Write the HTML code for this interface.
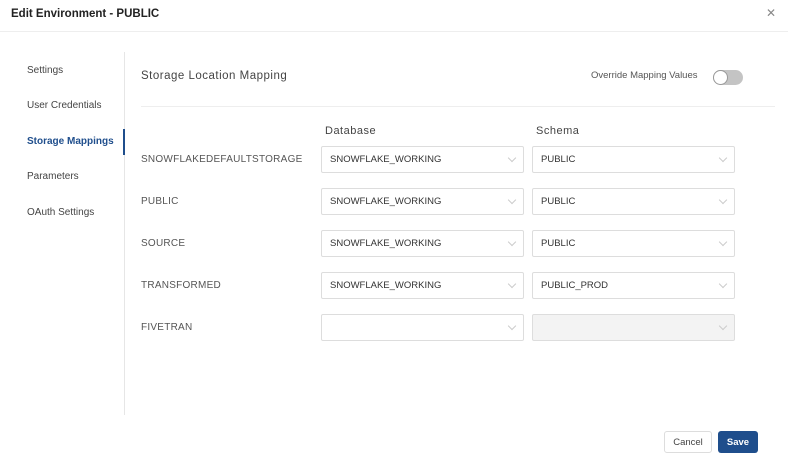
<!DOCTYPE html>
<html><head><style>
*{box-sizing:border-box;margin:0;padding:0}
body{width:788px;height:465px;background:#fff;font-family:"Liberation Sans",sans-serif;position:relative;overflow:hidden;color:#333}
.a{position:absolute}
.hdr{left:11px;top:8px;font-size:11.5px;font-weight:bold;color:#222}
.x{left:766px;top:6px;font-size:12px;color:#888;font-weight:normal}
.side{left:27px;font-size:10px;color:#444;line-height:12px}
.lbl{left:141px;font-size:10px;letter-spacing:.25px;color:#555;line-height:12px}
.sel{width:203px;height:27px;border:1px solid #ddd;border-radius:2px;font-size:9.5px;color:#333;padding:0 0 0 8px;line-height:25px}
.sel:after{content:"";position:absolute;right:8px;top:8px;width:5px;height:5px;border-right:1px solid #ccc;border-bottom:1px solid #ccc;transform:rotate(45deg)}
.btn{height:22px;border-radius:3px;font-size:9.5px;text-align:center;display:flex;align-items:center;justify-content:center}
</style></head><body>
<div class="a hdr">Edit Environment - PUBLIC</div>
<div class="a x">✕</div>
<div class="a" style="left:0;top:31px;width:788px;height:1px;background:#eee"></div>
<div class="a" style="left:124px;top:52px;width:1px;height:363px;background:#e6e6e6"></div>
<div class="a" style="left:123px;top:129px;width:2px;height:26px;background:#1f4e8c"></div>
<div class="a side" style="top:65px">Settings</div>
<div class="a side" style="top:100px">User Credentials</div>
<div class="a side" style="top:136px;color:#1f4e8c;font-weight:bold">Storage Mappings</div>
<div class="a side" style="top:171px">Parameters</div>
<div class="a side" style="top:207px">OAuth Settings</div>
<div class="a" style="left:141px;top:69px;font-size:11.5px;letter-spacing:.5px;color:#444;line-height:14px">Storage Location Mapping</div>
<div class="a" style="left:591px;top:70px;font-size:9.5px;color:#555;line-height:12px">Override Mapping Values</div>
<div class="a" style="left:713px;top:70px;width:30px;height:15px;border-radius:8px;background:#c4c4c4"></div>
<div class="a" style="left:713px;top:70px;width:15px;height:15px;border-radius:50%;background:#fff;border:1px solid #999"></div>
<div class="a" style="left:141px;top:106px;width:634px;height:1px;background:#eee"></div>
<div class="a" style="left:325px;top:124px;font-size:11px;letter-spacing:.5px;color:#444;line-height:14px">Database</div>
<div class="a" style="left:536px;top:124px;font-size:11px;letter-spacing:.5px;color:#444;line-height:14px">Schema</div>

<div class="a lbl" style="top:154px">SNOWFLAKEDEFAULTSTORAGE</div>
<div class="a sel" style="left:321px;top:146px">SNOWFLAKE_WORKING</div>
<div class="a sel" style="left:532px;top:146px">PUBLIC</div>

<div class="a lbl" style="top:196px">PUBLIC</div>
<div class="a sel" style="left:321px;top:188px">SNOWFLAKE_WORKING</div>
<div class="a sel" style="left:532px;top:188px">PUBLIC</div>

<div class="a lbl" style="top:238px">SOURCE</div>
<div class="a sel" style="left:321px;top:230px">SNOWFLAKE_WORKING</div>
<div class="a sel" style="left:532px;top:230px">PUBLIC</div>

<div class="a lbl" style="top:280px">TRANSFORMED</div>
<div class="a sel" style="left:321px;top:272px">SNOWFLAKE_WORKING</div>
<div class="a sel" style="left:532px;top:272px">PUBLIC_PROD</div>

<div class="a lbl" style="top:322px">FIVETRAN</div>
<div class="a sel" style="left:321px;top:314px"></div>
<div class="a sel" style="left:532px;top:314px;background:#f3f3f3"></div>

<div class="a btn" style="left:664px;top:431px;width:48px;border:1px solid #ddd;color:#444">Cancel</div>
<div class="a btn" style="left:718px;top:431px;width:40px;background:#1f4e8c;color:#fff;font-weight:bold">Save</div>
</body></html>
